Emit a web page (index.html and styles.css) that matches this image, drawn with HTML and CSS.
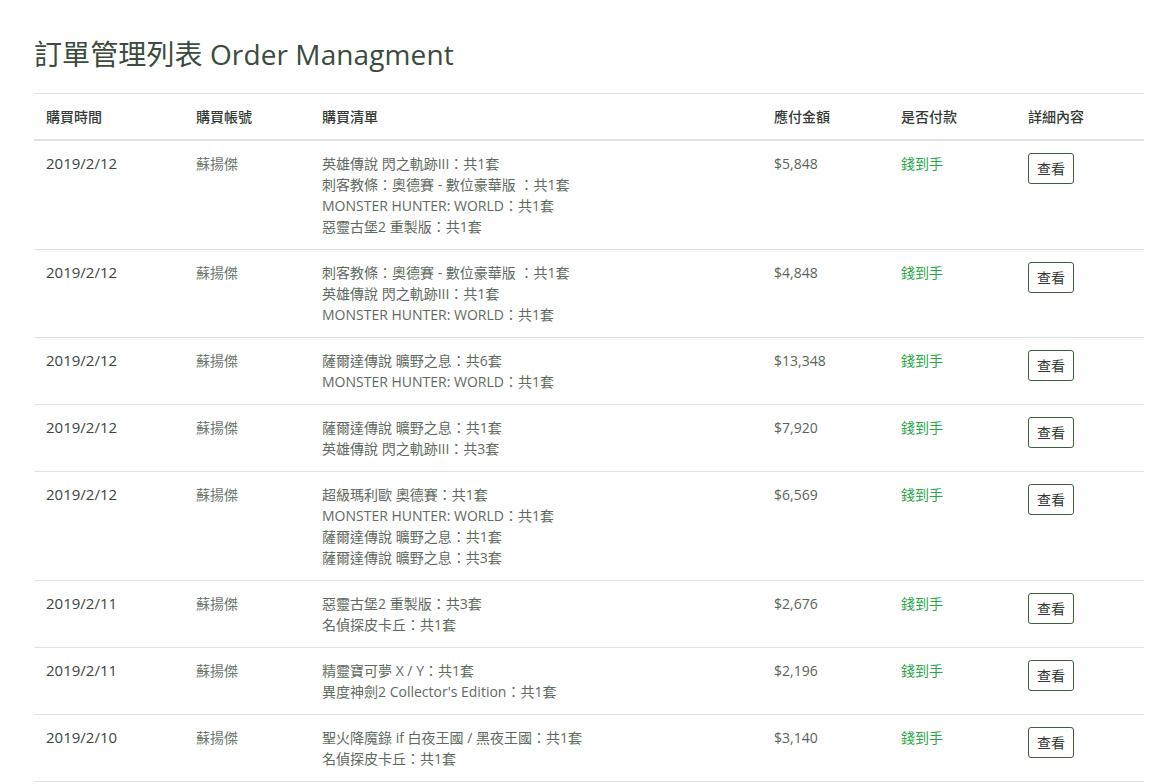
FILE: index.html
```html
<!DOCTYPE html>
<html lang="zh-Hant">
<head>
<meta charset="utf-8">
<title>訂單管理列表</title>
<link rel="stylesheet" href="styles.css">
</head>
<body>
<div class="container">
  <h2 class="title">訂單管理列表 Order Managment</h2>
  <table class="orders">
    <thead>
      <tr>
        <th class="c-date">購買時間</th>
        <th class="c-user">購買帳號</th>
        <th class="c-items">購買清單</th>
        <th class="c-amt">應付金額</th>
        <th class="c-paid">是否付款</th>
        <th class="c-detail">詳細內容</th>
      </tr>
    </thead>
    <tbody>
      <tr>
        <td class="date">2019/2/12</td>
        <td class="user">蘇揚傑</td>
        <td class="items">英雄傳說 閃之軌跡III：共1套<br>刺客教條：奧德賽 - 數位豪華版 ：共1套<br>MONSTER HUNTER: WORLD：共1套<br>惡靈古堡2 重製版：共1套</td>
        <td class="amt">$5,848</td>
        <td class="paid">錢到手</td>
        <td><button class="btn">查看</button></td>
      </tr>
      <tr>
        <td class="date">2019/2/12</td>
        <td class="user">蘇揚傑</td>
        <td class="items">刺客教條：奧德賽 - 數位豪華版 ：共1套<br>英雄傳說 閃之軌跡III：共1套<br>MONSTER HUNTER: WORLD：共1套</td>
        <td class="amt">$4,848</td>
        <td class="paid">錢到手</td>
        <td><button class="btn">查看</button></td>
      </tr>
      <tr>
        <td class="date">2019/2/12</td>
        <td class="user">蘇揚傑</td>
        <td class="items">薩爾達傳說 曠野之息：共6套<br>MONSTER HUNTER: WORLD：共1套</td>
        <td class="amt">$13,348</td>
        <td class="paid">錢到手</td>
        <td><button class="btn">查看</button></td>
      </tr>
      <tr>
        <td class="date">2019/2/12</td>
        <td class="user">蘇揚傑</td>
        <td class="items">薩爾達傳說 曠野之息：共1套<br>英雄傳說 閃之軌跡III：共3套</td>
        <td class="amt">$7,920</td>
        <td class="paid">錢到手</td>
        <td><button class="btn">查看</button></td>
      </tr>
      <tr>
        <td class="date">2019/2/12</td>
        <td class="user">蘇揚傑</td>
        <td class="items">超級瑪利歐 奧德賽：共1套<br>MONSTER HUNTER: WORLD：共1套<br>薩爾達傳說 曠野之息：共1套<br>薩爾達傳說 曠野之息：共3套</td>
        <td class="amt">$6,569</td>
        <td class="paid">錢到手</td>
        <td><button class="btn">查看</button></td>
      </tr>
      <tr>
        <td class="date">2019/2/11</td>
        <td class="user">蘇揚傑</td>
        <td class="items">惡靈古堡2 重製版：共3套<br>名偵探皮卡丘：共1套</td>
        <td class="amt">$2,676</td>
        <td class="paid">錢到手</td>
        <td><button class="btn">查看</button></td>
      </tr>
      <tr>
        <td class="date">2019/2/11</td>
        <td class="user">蘇揚傑</td>
        <td class="items">精靈寶可夢 X / Y：共1套<br>異度神劍2 Collector's Edition：共1套</td>
        <td class="amt">$2,196</td>
        <td class="paid">錢到手</td>
        <td><button class="btn">查看</button></td>
      </tr>
      <tr>
        <td class="date">2019/2/10</td>
        <td class="user">蘇揚傑</td>
        <td class="items">聖火降魔錄 if 白夜王國 / 黑夜王國：共1套<br>名偵探皮卡丘：共1套</td>
        <td class="amt">$3,140</td>
        <td class="paid">錢到手</td>
        <td><button class="btn">查看</button></td>
      </tr>
    </tbody>
  </table>
</div>
</body>
</html>
```

FILE: styles.css
```css
* { box-sizing: border-box; }
html, body {
  margin: 0;
  padding: 0;
  background: #ffffff;
}
body {
  font-family: "Open Sans", "Noto Sans CJK TC", sans-serif;
  font-size: 14px;
  line-height: 21px;
  color: #3e4a3f;
}
.container {
  width: 1110px;
  margin-left: 34px;
  padding-top: 37px;
}
.title {
  margin: 0 0 22px 0;
  font-size: 28px;
  line-height: 34px;
  font-weight: 400;
  color: #3b4b3d;
  letter-spacing: 0.1px;
}
.orders {
  width: 1110px;
  border-collapse: collapse;
  table-layout: fixed;
}
.orders th,
.orders td {
  padding: 12px;
  text-align: left;
  vertical-align: top;
}
.orders th {
  font-weight: 500;
  color: #333a34;
  border-top: 1px solid #dee2e6;
  border-bottom: 2px solid #dee2e6;
}
.orders td {
  border-bottom: 1px solid #dee2e6;
}
.c-date { width: 150px; }
.c-user { width: 126px; }
.c-items { width: 452px; }
.c-amt { width: 127px; }
.c-paid { width: 127px; }
.c-detail { width: 128px; }
.date {
  font-size: 15px;
  color: #3a463b;
}
.user {
  color: #6a756b;
}
.items {
  color: #5f6a60;
}
.amt {
  color: #586459;
}
.paid {
  color: #28a745;
}
.btn {
  display: block;
  margin-top: 0;
  padding: 4px 8px;
  font-family: "Open Sans", "Noto Sans CJK TC", sans-serif;
  font-size: 14px;
  line-height: 21px;
  color: #333a34;
  background: #ffffff;
  border: 1px solid #3d5e41;
  border-radius: 3px;
  cursor: pointer;
}
```
